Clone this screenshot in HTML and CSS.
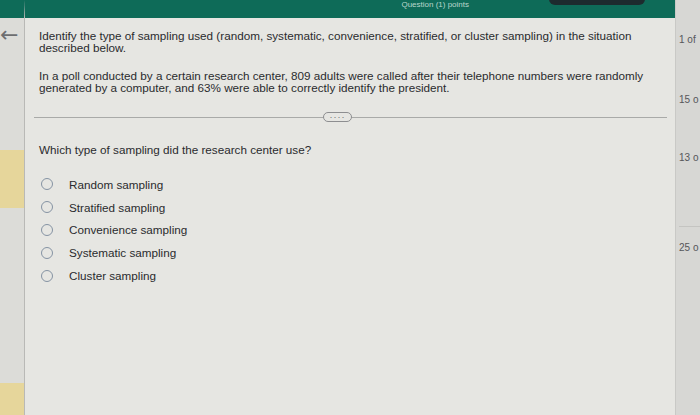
FILE: index.html
```html
<!DOCTYPE html>
<html lang="en">
<head>
    <meta charset="UTF-8">
    <title>Sampling Question</title>
    <link rel="stylesheet" href="styles.css">
</head>
<body>
    <div class="screen">
        <!-- Sol kenar çubuğu -->
        <aside class="left-strip">
            <div class="back-arrow">&#8592;</div>
            <div class="mark mark-one"></div>
            <div class="mark mark-two"></div>
        </aside>

        <!-- Soru alanı -->
        <div class="center">
            <header class="topbar">
                <span class="topbar-text">Question (1) points</span>
                <span class="topbar-pill"></span>
            </header>
            <main class="panel">
                <p class="prompt">Identify the type of sampling used (random, systematic, convenience, stratified, or cluster sampling) in the situation described below.</p>
                <p class="prompt">In a poll conducted by a certain research center, 809 adults were called after their telephone numbers were randomly generated by a computer, and 63% were able to correctly identify the president.</p>
                <div class="divider">
                    <span class="dots">&middot;&middot;&middot;&middot;</span>
                </div>
                <p class="question">Which type of sampling did the research center use?</p>
                <ul class="choices">
                    <li><span class="radio"></span>Random sampling</li>
                    <li><span class="radio"></span>Stratified sampling</li>
                    <li><span class="radio"></span>Convenience sampling</li>
                    <li><span class="radio"></span>Systematic sampling</li>
                    <li><span class="radio"></span>Cluster sampling</li>
                </ul>
            </main>
        </div>

        <!-- Sağ kenar çubuğu -->
        <aside class="right-strip">
            <div class="count c1">1 of</div>
            <div class="count c2">15 o</div>
            <div class="count c3">13 o</div>
            <div class="count c4">25 o</div>
        </aside>
    </div>
</body>
</html>
```

FILE: styles.css
```css
/* Genel sayfa */
body {
    margin: 0;
    padding: 0;
    font-family: "Liberation Sans", Arial, sans-serif;
    color: #2a2b2e;
    background-color: #d9d9d6;
}

.screen {
    display: flex;
    width: 700px;
    height: 415px;
    overflow: hidden;
}

/* Sol şerit */
.left-strip {
    width: 25px;
    flex-shrink: 0;
    background-color: #dcdcd8;
    border-right: 1px solid #b9b9b6;
    border-top: 18px solid #0e6b58;
    box-sizing: border-box;
    display: flex;
    flex-direction: column;
}

.back-arrow {
    font-family: "DejaVu Sans", sans-serif;
    font-size: 22px;
    line-height: 22px;
    color: #6d6e70;
    margin-top: 6px;
    margin-left: 0;
}

.mark {
    background-color: #e6d69b;
}

.mark-one {
    height: 58px;
    margin-top: 104px;
}

.mark-two {
    height: 32px;
    margin-top: 175px;
}

/* Orta alan */
.center {
    width: 650px;
    flex-shrink: 0;
    display: flex;
    flex-direction: column;
}

.topbar {
    height: 18px;
    background-color: #0e6b58;
    display: flex;
    align-items: flex-start;
    justify-content: flex-end;
}

.topbar-text {
    font-size: 8px;
    line-height: 8px;
    color: #b9d6cc;
    margin-top: 1px;
    margin-right: 80px;
}

.topbar-pill {
    width: 96px;
    height: 6px;
    margin-top: -1px;
    margin-right: 30px;
    background-color: #1d2b2e;
    border-radius: 0 0 8px 8px;
}

.panel {
    flex: 1;
    background-color: #e6e6e2;
    padding: 12px 8px 0 14px;
}

.prompt {
    margin: 0 0 16px 0;
    font-size: 11.7px;
    line-height: 12px;
    padding-right: 8px;
}

/* Ayraç çizgisi */
.divider {
    margin: 23px 0 0 -5px;
    height: 1px;
    background-color: #a9aaa8;
    position: relative;
}

.dots {
    position: absolute;
    left: 289px;
    top: -5px;
    width: 29px;
    height: 10px;
    border: 1px solid #8d8e90;
    border-radius: 6px;
    background-color: #e6e6e2;
    font-size: 9px;
    line-height: 8px;
    text-align: center;
    color: #6c6d70;
    box-sizing: border-box;
    letter-spacing: 1px;
}

.question {
    margin: 26px 0 0 0;
    font-size: 11.7px;
    line-height: 12px;
}

.choices {
    list-style: none;
    margin: 17px 0 0 0;
    padding: 0;
}

.choices li {
    display: flex;
    align-items: center;
    height: 22.8px;
    font-size: 11.7px;
}

.radio {
    width: 10px;
    height: 10px;
    border: 1.5px solid #8593a3;
    border-radius: 50%;
    margin-right: 16px;
    margin-left: 2px;
    box-sizing: content-box;
}

/* Sağ şerit */
.right-strip {
    flex: 1;
    background-color: #d7d7d4;
    border-left: 1px solid #c9c9c6;
    position: relative;
    font-size: 10px;
    color: #55565a;
}

.count {
    position: absolute;
    left: 3px;
}

.c1 { top: 34px; }
.c2 { top: 94px; }
.c3 { top: 152px; }
.c4 { top: 226px; width: 40px; padding-top: 15px; border-top: 1px solid #c4c4c1; }
```
